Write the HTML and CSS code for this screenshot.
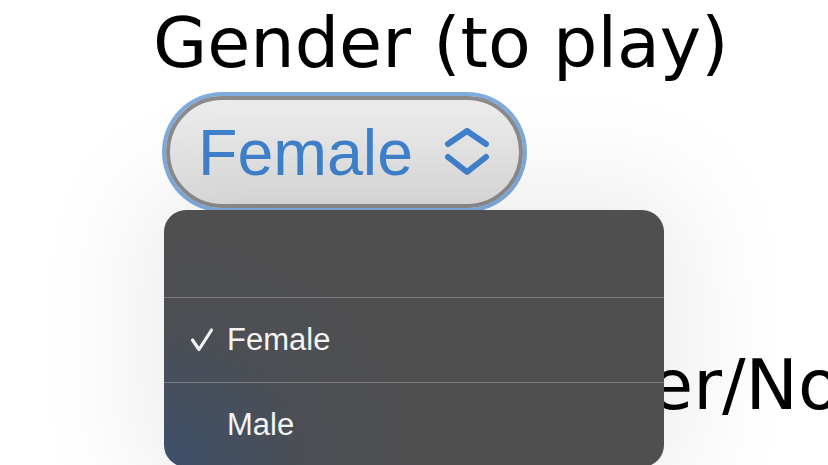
FILE: index.html
```html
<!DOCTYPE html>
<html lang="en">
<head>
<meta charset="utf-8">
<title>Gender</title>
<link rel="stylesheet" href="styles.css">
</head>
<body>
<main class="form">
  <label class="field-label" for="gender">Gender (to play)</label>
  <div class="picker">
    <button class="select" id="gender" type="button">
      <span class="select-value">Female</span>
      <svg class="chevrons" width="46" height="48" viewBox="0 0 46 48" aria-hidden="true">
        <polyline points="4,16 23,3 42,16" />
        <polyline points="4,29 23,44 42,29" />
      </svg>
    </button>
    <ul class="menu" role="listbox">
      <li class="menu-item empty" role="option"></li>
      <li class="menu-item selected" role="option">
        <svg class="check" width="24" height="26" viewBox="0 0 24 26" aria-hidden="true">
          <polyline points="2.5,13 9,22.5 21.5,3" />
        </svg>
        <span>Female</span>
      </li>
      <li class="menu-item" role="option"><span>Male</span></li>
    </ul>
  </div>
  <p class="field-label second">Gender/Nonbinary</p>
</main>
</body>
</html>
```

FILE: styles.css
```css
html, body {
  margin: 0;
  height: 100%;
}

body {
  width: 828px;
  height: 465px;
  overflow: hidden;
  background: #ffffff;
  font-family: "DejaVu Sans", sans-serif;
}

.form {
  display: flex;
  flex-direction: column;
  align-items: flex-start;
  padding: 3px 0 0 153px;
}

.field-label {
  display: block;
  margin: 0;
  font-size: 70px;
  line-height: 81.5px;
  color: #000;
  white-space: nowrap;
}

.field-label.second {
  margin: 137px 0 0 311px;
}

.picker {
  position: relative;
  margin: 11.5px 0 0 13px;
}

.select {
  display: flex;
  align-items: center;
  gap: 31px;
  box-sizing: border-box;
  width: 357px;
  height: 112px;
  padding: 0 0 0 28px;
  border: 4px solid #8b8b8d;
  border-radius: 56px;
  background: linear-gradient(#ececec, #dedede);
  box-shadow: 0 0 0 4px #7eacdc;
  font-family: "Liberation Sans", Arial, sans-serif;
  font-size: 64.5px;
  color: #3f82cc;
  cursor: pointer;
}

.select-value {
  line-height: 1;
  margin-top: 3px;
}

.chevrons polyline {
  fill: none;
  stroke: #3f82cc;
  stroke-width: 6;
  stroke-linecap: round;
  stroke-linejoin: round;
}

.menu {
  position: absolute;
  left: -2px;
  top: 114px;
  width: 500px;
  margin: 0;
  padding: 0;
  list-style: none;
  border-radius: 22px;
  overflow: hidden;
  background:
    radial-gradient(ellipse 260px 240px at 0% 100%, rgba(58, 80, 112, 0.85), rgba(70, 78, 90, 0.4) 55%, rgba(80, 80, 80, 0) 100%),
    #4f4f50;
  box-shadow: 0 0 110px 30px rgba(0, 0, 0, 0.07);
  font-family: "Liberation Sans", Arial, sans-serif;
  font-size: 31px;
  color: #f4f4f4;
}

.menu-item {
  display: flex;
  align-items: center;
  gap: 13px;
  height: 84px;
  padding-left: 26px;
  border-top: 1px solid #7c7c7e;
}

.menu-item.empty {
  height: 87px;
  border-top: none;
}

.menu-item span {
  margin-left: 37px;
}

.menu-item.selected span {
  margin-left: 0;
}

.check polyline {
  fill: none;
  stroke: #f4f4f4;
  stroke-width: 3.2;
  stroke-linecap: round;
  stroke-linejoin: round;
}
```
